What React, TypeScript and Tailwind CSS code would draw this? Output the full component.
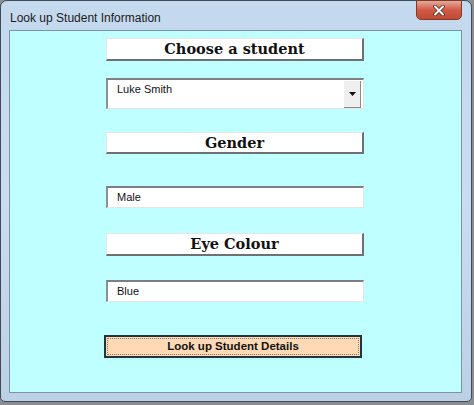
import React from "react";

const labelCls =
  "w-[258px] bg-white border-t border-l border-t-[#e6e6e6] border-l-[#e6e6e6] border-r-2 border-b-2 border-r-[#6e7173] border-b-[#6e7173] flex items-center justify-center text-[14.5px] font-bold text-[#111] [font-family:'DejaVu_Serif',serif]";

const boxCls =
  "w-[258px] bg-white border-t-2 border-l-2 border-t-[#7d7f80] border-l-[#8d8f90] border-r border-b border-r-[#e4e4e4] border-b-[#e4e4e4] pl-[9px] text-[11px] text-[#111] [font-family:'Liberation_Sans',sans-serif]";

export default function App() {
  return (
    <div className="w-[474px] h-[405px] bg-[#8b8d90] overflow-hidden">
      <div className="w-[472px] h-[402px] rounded-t-[7px] rounded-b-[5px] border border-[#3e4a58] bg-gradient-to-b from-[#c4d9ee] via-[#cadcef] to-[#bcd0e6] flex flex-col">
        {/* title bar */}
        <div className="h-[29px] flex items-start relative">
          <div className="pl-[9px] pt-[8px] text-[12px] text-[#1b1b1b] [font-family:'Liberation_Sans',sans-serif]">
            Look up Student Information
          </div>
          <div className="absolute left-[415px] top-[-1px] w-[46px] h-[20px] rounded-b-[5px] border border-[#7a3a30] bg-gradient-to-b from-[#e6a99b] via-[#cf5a44] to-[#c44a33] flex items-center justify-center">
            <svg width="12" height="11" viewBox="0 0 12 11">
              <path d="M2 1.5 L10 9.5 M10 1.5 L2 9.5" stroke="#5a2a22" strokeWidth="3.6" strokeLinecap="round" />
              <path d="M2 1.5 L10 9.5 M10 1.5 L2 9.5" stroke="#ffffff" strokeWidth="2" strokeLinecap="round" />
            </svg>
          </div>
        </div>
        {/* content */}
        <div className="ml-[8px] w-[453px] h-[363px] border border-[#7c93ab] bg-[#bfffff] flex flex-col items-start pl-[96px]">
          <div className={labelCls + " h-[23px] mt-[7px]"}>Choose a student</div>
          <div className={boxCls + " h-[31px] mt-[17px] flex items-start pr-[2px] py-[1px]"}>
            <span className="flex-1 pt-0">Luke Smith</span>
            <div className="w-[17px] h-[27px] bg-[#efefef] border-r border-b border-[#8a8a8a] flex items-center justify-center">
              <svg width="7" height="4" viewBox="0 0 7 4">
                <path d="M0 0 L7 0 L3.5 4 Z" fill="#111" />
              </svg>
            </div>
          </div>
          <div className={labelCls + " h-[22px] mt-[23px]"}>Gender</div>
          <div className={boxCls + " h-[22px] mt-[32px] flex items-center"}>Male</div>
          <div className={labelCls + " h-[23px] mt-[25px]"}>Eye Colour</div>
          <div className={boxCls + " h-[22px] mt-[24px] flex items-center"}>Blue</div>
          <div className="w-[258px] h-[23px] mt-[33px] ml-[-2px] border-2 border-[#23343a] bg-[#ffd9b5] p-[1px]">
            <div className="w-full h-full border border-dotted border-[#8a7a6a] flex items-center justify-center text-[11.5px] font-bold text-[#111] [font-family:'Liberation_Sans',sans-serif]">
              Look up Student Details
            </div>
          </div>
        </div>
      </div>
    </div>
  );
}
